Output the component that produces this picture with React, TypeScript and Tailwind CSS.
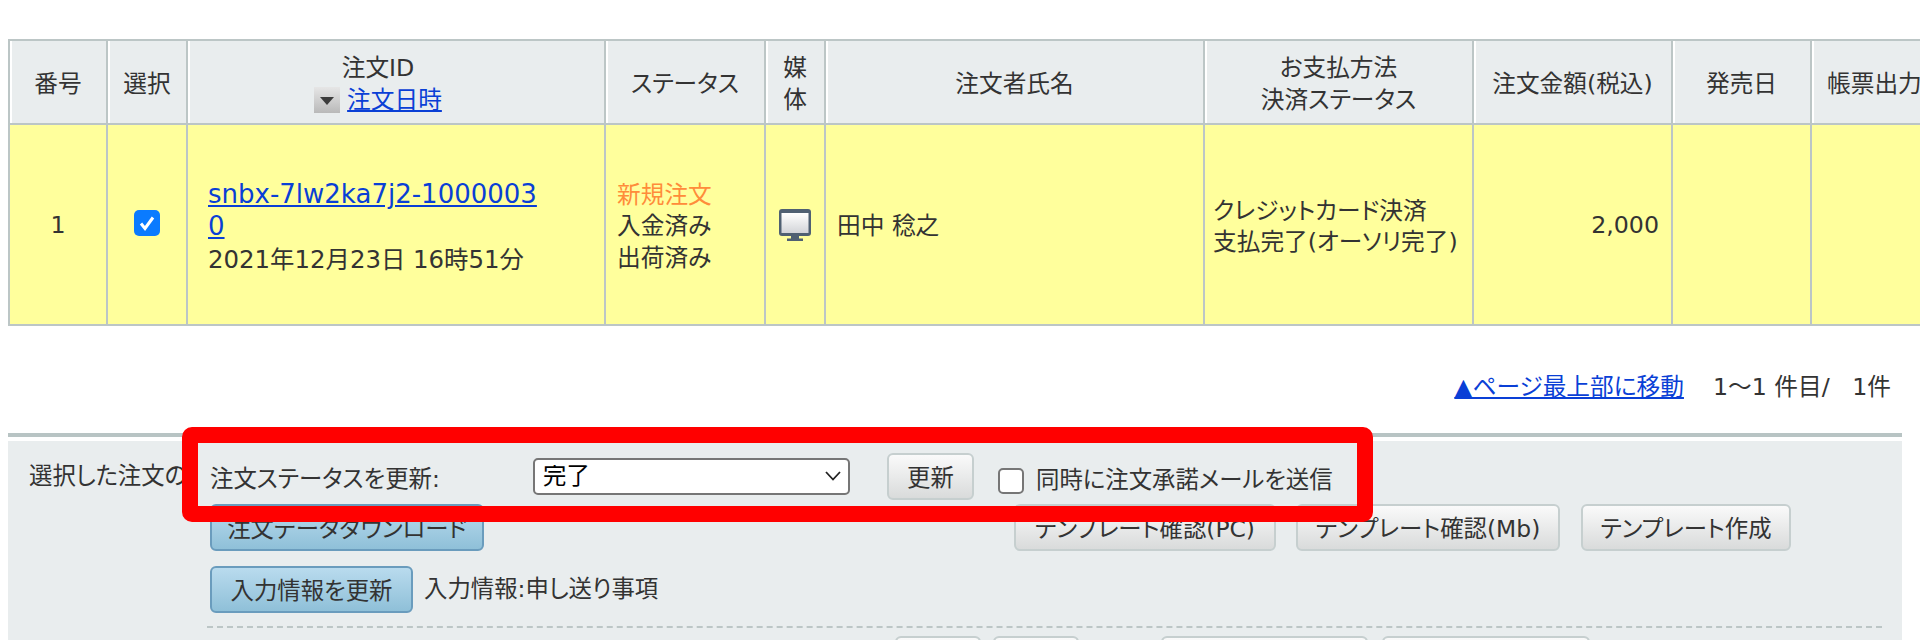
import { ReactNode } from "react";

const headCell = "border-r-2 border-b-2 border-t-2 border-[#bcc6c6] bg-[#e9edee] pt-[5px] font-normal text-center align-middle shadow-[inset_2px_0_0_#ffffff]";
const bodyCell = "border-r-2 border-b-2 border-[#bcc6c6] bg-[#ffff9c] align-middle";
const linkText = "text-[#0a3fd6] underline";

function Btn({ children, blue, className }: { children?: ReactNode; blue?: boolean; className: string }) {
  return (
    <button
      className={`${className} h-[47px] shrink-0 rounded-[6px] border-2 pt-[4px] text-center whitespace-nowrap ${
        blue
          ? "border-[#6a9cbd] bg-gradient-to-b from-[#b9dbee] to-[#8fc0d8]"
          : "border-[#c6cfcf] bg-gradient-to-b from-[#fafafa] to-[#d9dbdb]"
      }`}
    >
      {children}
    </button>
  );
}

function SortIcon() {
  return (
    <svg width="26" height="26" viewBox="0 0 26 26" className="shrink-0">
      <defs>
        <linearGradient id="sort" x1="0" y1="0" x2="0" y2="1">
          <stop offset="0" stopColor="#e6e6e6" />
          <stop offset="1" stopColor="#b9b9b9" />
        </linearGradient>
      </defs>
      <rect width="26" height="26" fill="url(#sort)" />
      <path d="M6 10h14l-7 8z" fill="#3c3c3c" />
    </svg>
  );
}

function MonitorIcon() {
  return (
    <svg width="32" height="32" viewBox="0 0 32 32" className="block mx-auto">
      <defs>
        <linearGradient id="screen" x1="0" y1="0" x2="0" y2="1">
          <stop offset="0" stopColor="#ffffff" />
          <stop offset="1" stopColor="#d2d4d8" />
        </linearGradient>
      </defs>
      <rect x="0" y="0" width="32" height="27" rx="3" fill="#4f6072" />
      <rect x="2.5" y="4" width="27" height="20" fill="url(#screen)" />
      <path d="M12 27h8v2.5h4V32H8v-2.5h4z" fill="#4f6072" />
    </svg>
  );
}

export default function App() {
  return (
    <div className="relative w-[1920px] h-[640px] overflow-hidden bg-white pt-[39px] pl-[8px] text-[23.7px] leading-[31.5px] text-[#333333] [font-feature-settings:'palt'] font-['DejaVu_Sans','Noto_Sans_CJK_JP',sans-serif]">
      <table className="table-fixed w-[2054px] border-separate border-spacing-0">
        <colgroup>
          <col className="w-[100px]" />
          <col className="w-[80px]" />
          <col className="w-[418px]" />
          <col className="w-[160px]" />
          <col className="w-[60px]" />
          <col className="w-[379px]" />
          <col className="w-[269px]" />
          <col className="w-[199px]" />
          <col className="w-[139px]" />
          <col className="w-[250px]" />
        </colgroup>
        <thead>
          <tr className="h-[86px]">
            <th className={`${headCell} border-l-2`}>番号</th>
            <th className={headCell}>選択</th>
            <th className={`${headCell} pr-[36px]`}>
              <div>注文ID</div>
              <div className="flex items-center justify-center gap-[7px]">
                <SortIcon />
                <a className={linkText}>注文日時</a>
              </div>
            </th>
            <th className={headCell}>ステータス</th>
            <th className={headCell}>媒<br />体</th>
            <th className={headCell}>注文者氏名</th>
            <th className={headCell}>お支払方法<br />決済ステータス</th>
            <th className={`${headCell} whitespace-nowrap`}>注文金額(税込)</th>
            <th className={headCell}>発売日</th>
            <th className={`${headCell} text-left pl-[15px]`}>帳票出力</th>
          </tr>
        </thead>
        <tbody>
          <tr className="h-[201px]">
            <td className={`${bodyCell} border-l-2 pt-[2px] text-center`}>1</td>
            <td className={`${bodyCell} text-center`}>
              <span className="inline-flex w-[26px] h-[26px] mb-[4px] items-center justify-center rounded-[5px] bg-[#0a7bff] align-middle">
                <svg width="20" height="20" viewBox="0 0 20 20" fill="none">
                  <path d="M4 10.5l4 5 8-11" stroke="#fff" strokeWidth="3" />
                </svg>
              </span>
            </td>
            <td className={`${bodyCell} pl-[20px] pt-[5px]`}>
              <a className={`${linkText} text-[26px]`}>snbx-7lw2ka7j2-1000003<br />0</a>
              <div className="text-[24.4px]">2021年12月23日 16時51分</div>
            </td>
            <td className={`${bodyCell} pl-[11px] pt-[5px]`}>
              <div className="text-[#ff8c3a]">新規注文</div>
              <div>入金済み</div>
              <div>出荷済み</div>
            </td>
            <td className={bodyCell}><MonitorIcon /></td>
            <td className={`${bodyCell} pl-[11px] pt-[5px]`}>田中 稔之</td>
            <td className={`${bodyCell} pl-[8px] pt-[5px] whitespace-nowrap`}>クレジットカード決済<br />支払完了(オーソリ完了)</td>
            <td className={`${bodyCell} text-right pr-[12px] pt-[2px]`}>2,000</td>
            <td className={bodyCell}></td>
            <td className={bodyCell}></td>
          </tr>
        </tbody>
      </table>

      <div className="mt-[43px] flex justify-end pr-[29px] h-[32px] pt-[3px] whitespace-pre">
        <a className={linkText}>▲ページ最上部に移動</a>
        <span className="ml-[29px]">1〜1 件目/   1件</span>
      </div>

      <div className="mt-[32px] w-[1894px] border-t-4 border-[#b8c4c4] pt-1 bg-white">
        <div className="flex bg-[#e9edee] pl-[21px] pr-[20px] pt-[12px] h-[300px] text-[23.4px]">
          <div className="w-[181px] shrink-0 pt-[8px] whitespace-nowrap overflow-hidden">選択した注文の</div>
          <div className="flex-1">
            <div className="flex items-center">
              <span className="w-[323px] shrink-0 pt-[6px]">注文ステータスを更新:</span>
              <div className="relative w-[317px] h-[37px] shrink-0">
                <select className="w-full h-full appearance-none rounded-[5px] border-2 border-[#767676] bg-white pl-[8px] text-black leading-none">
                  <option>完了</option>
                </select>
                <svg width="20" height="12" viewBox="0 0 20 12" fill="none" className="absolute right-[7px] top-[12px] pointer-events-none">
                  <path d="M3 2l7 7.5L17 2" stroke="#222" strokeWidth="1.8" />
                </svg>
              </div>
              <Btn className="ml-[37px] w-[87px]">更新</Btn>
              <span className="ml-[24px] w-[26px] h-[26px] shrink-0 rounded-[5px] border-2 border-[#767676] bg-white mt-[8px]" />
              <span className="ml-[12px] pt-[8px] whitespace-nowrap">同時に注文承諾メールを送信</span>
            </div>
            <div className="mt-[4px] flex pr-[91px]">
              <Btn blue className="w-[274px]">注文データダウンロード</Btn>
              <Btn className="ml-auto w-[262px]">テンプレート確認(PC)</Btn>
              <Btn className="ml-[20px] w-[264px]">テンプレート確認(Mb)</Btn>
              <Btn className="ml-[21px] w-[210px]">テンプレート作成</Btn>
            </div>
            <div className="mt-[15px] flex items-center">
              <Btn blue className="w-[203px]">入力情報を更新</Btn>
              <span className="ml-[11px]">入力情報:申し送り事項</span>
            </div>
            <div className="mt-[13px] ml-[-3px] border-t-2 border-dashed border-[#bcc6c6]" />
            <div className="mt-[8px] flex pl-[685px]">
              <Btn className="w-[86px]" />
              <Btn className="ml-[12px] w-[86px]" />
              <Btn className="ml-[82px] w-[207px]" />
              <Btn className="ml-[14px] w-[208px]" />
            </div>
          </div>
        </div>
      </div>

      <div className="absolute left-[182px] top-[427px] w-[1191px] h-[95px] rounded-[10px] border-[16px] border-[#ff0000]" />
    </div>
  );
}
